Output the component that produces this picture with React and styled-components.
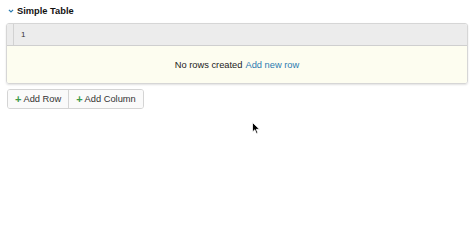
import React from 'react'
import styled, { createGlobalStyle } from 'styled-components'

const Global = createGlobalStyle`
    body {
        margin: 0;
        background: #fff;
        font-family: "Liberation Sans", Arial, sans-serif;
        color: #222;
    }
`

const Page = styled.div`
    position: relative;
    width: 474px;
    height: 242px;
    padding: 4px 6px 0 6px;
    box-sizing: border-box;
`

const Title = styled.div`
    display: flex;
    align-items: center;
    gap: 3px;
    height: 14px;
    padding-left: 2px;
    font-size: 9.3px;
    font-weight: bold;
    color: #111;

    svg {
        width: 6px;
        height: 6px;
    }
`

const TableBox = styled.div`
    margin-top: 5px;
    border: 1px solid #d6d6d6;
    border-radius: 3px;
    box-shadow: 0 1px 2px rgba(0, 0, 0, 0.12);
    overflow: hidden;
    width: 460px;
`

const HeaderRow = styled.div`
    display: flex;
    height: 21px;
    background: #ececec;
    border-bottom: 1px solid #cfcfcf;
    font-size: 8px;
    color: #333;
`

const HeadCell = styled.div`
    display: flex;
    align-items: center;
    width: ${(props) => props.width || 'auto'};
    flex: ${(props) => props.grow ? 1 : 'none'};
    padding-left: ${(props) => props.pad || 0}px;
    border-right: ${(props) => props.divider ? '1px solid #d2d2d2' : 'none'};
    box-sizing: border-box;
`

const EmptyRow = styled.div`
    display: flex;
    align-items: center;
    justify-content: center;
    height: 37px;
    background: #fdfdf0;
    font-size: 9.3px;
    color: #222;

    a {
        color: #2b7bb0;
        text-decoration: none;
        margin-left: 3px;
    }
`

const ButtonGroup = styled.div`
    display: inline-flex;
    margin-top: 5px;
    margin-left: 1px;
    border: 1px solid #d4d4d4;
    border-radius: 3px;
    overflow: hidden;
`

const Button = styled.button`
    display: flex;
    align-items: center;
    gap: 2px;
    height: 18px;
    padding: 0 7px;
    background: #fafafa;
    border: none;
    border-left: ${(props) => props.first ? 'none' : '1px solid #d4d4d4'};
    font-family: "Liberation Sans", Arial, sans-serif;
    font-size: 9.3px;
    color: #333;
    cursor: pointer;

    span.plus {
        color: #3c9a4b;
        font-weight: bold;
        font-size: 11px;
    }
`

const Cursor = styled.svg`
    position: absolute;
    left: 252px;
    top: 122px;
    width: 8px;
    height: 12px;
`

const Chevron = () => (
    <svg viewBox="0 0 10 10">
        <path d="M1.5 3 L5 6.5 L8.5 3" fill="none" stroke="#2b7bb0" strokeWidth="2" />
    </svg>
)

const App = () => {
    return (
        <Page>
            <Global />
            <Title>
                <Chevron />
                Simple Table
            </Title>
            <TableBox>
                <HeaderRow>
                    <HeadCell width="7px" divider />
                    <HeadCell grow pad={7}>1</HeadCell>
                </HeaderRow>
                <EmptyRow>
                    No rows created<a href="#">Add new row</a>
                </EmptyRow>
            </TableBox>
            <ButtonGroup>
                <Button first><span className="plus">+</span>Add Row</Button>
                <Button><span className="plus">+</span>Add Column</Button>
            </ButtonGroup>
            <Cursor viewBox="0 0 8 12">
                <path d="M0.5 0.5 L0.5 10 L2.8 7.8 L4.4 11.5 L5.8 10.9 L4.3 7.3 L7.5 7.3 Z" fill="#000" stroke="#fff" strokeWidth="0.8" />
            </Cursor>
        </Page>
    )
}

export default App
